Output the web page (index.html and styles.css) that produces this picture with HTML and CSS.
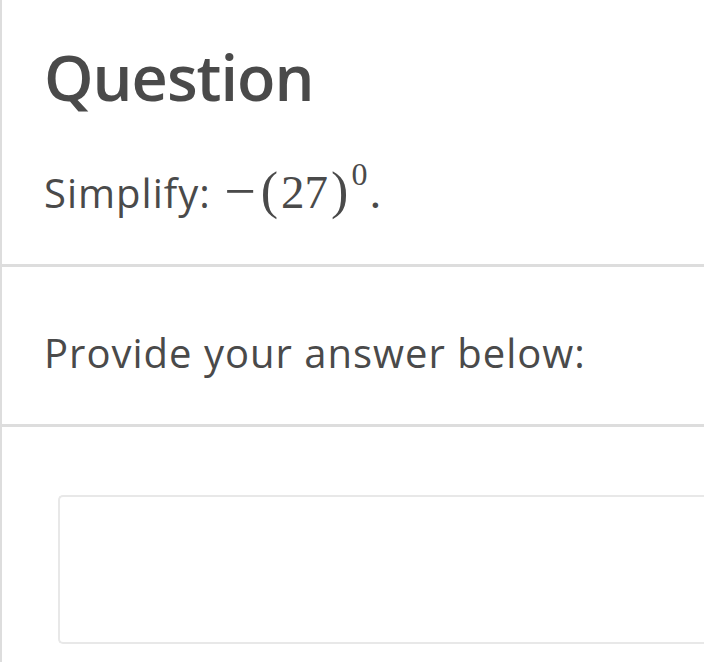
FILE: index.html
```html
<!DOCTYPE html>
<html>
<head>
<meta charset="utf-8">
<link rel="stylesheet" href="styles.css">
</head>
<body>
<div class="panel">
  <section class="question">
    <h1 class="title">Question</h1>
    <p class="prompt">Simplify: <span class="math"><span class="minus">−</span><span class="paren">(</span>27<span class="paren">)</span><sup class="sup">0</sup>.</span></p>
  </section>
  <section class="instruction">
    <p class="label">Provide your answer below:</p>
  </section>
  <section class="answer">
    <div class="answer-box"></div>
  </section>
</div>
</body>
</html>
```
FILE: styles.css
```css
html, body {
  margin: 0;
  padding: 0;
  background: #fff;
}
body {
  font-family: "Open Sans", "Liberation Sans", sans-serif;
  color: #4a4a4a;
  overflow: hidden;
}
.panel {
  border-left: 2px solid #dddddd;
  min-height: 662px;
}
.question {
  padding: 42px 0 0 42px;
  height: 222px;
  border-bottom: 3px solid #dddddd;
}
.title {
  margin: 0;
  font-size: 63px;
  font-weight: 600;
  line-height: 70px;
  letter-spacing: -1px;
}
.prompt {
  margin: 55px 0 0 0;
  font-size: 40px;
  line-height: 50px;
  letter-spacing: 1px;
}
.math {
  font-family: "Liberation Serif", "DejaVu Serif", serif;
  font-size: 47px;
  letter-spacing: 0;
  margin-left: 2px;
}
.minus {
  font-size: 56px;
  line-height: 0;
  position: relative;
  top: 2px;
  margin-right: 2px;
}
.paren {
  font-size: 52px;
  line-height: 40px;
  margin: 0 3px;
}
.sup {
  font-size: 32px;
  line-height: 0;
  vertical-align: baseline;
  position: relative;
  top: -23px;
  margin-left: 0;
  margin-right: 2px;
}
.instruction {
  height: 96px;
  padding: 61px 0 0 42px;
  border-bottom: 3px solid #dddddd;
}
.label {
  margin: 0;
  font-size: 40px;
  line-height: 50px;
  letter-spacing: 1px;
}
.answer {
  padding: 68px 0 0 56px;
}
.answer-box {
  height: 145px;
  border: 2px solid #e8e8e8;
  border-right: none;
  border-radius: 5px 0 0 5px;
}
```
